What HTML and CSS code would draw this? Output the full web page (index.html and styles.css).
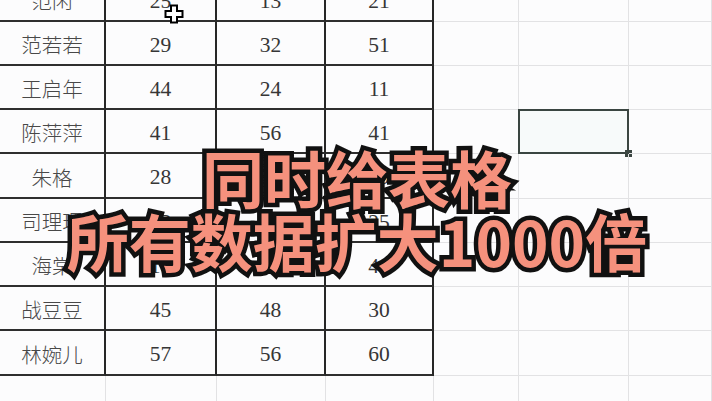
FILE: index.html
```html
<!DOCTYPE html>
<html lang="zh">
<head>
<meta charset="utf-8">
<title>表格</title>
<link rel="stylesheet" href="styles.css">
</head>
<body>
<div class="screen">
  <div class="sheet">
    <div class="c t n">范闲</div><div class="c t">25</div><div class="c t">13</div><div class="c t">21</div><div class="c"></div><div class="c"></div><div class="c"></div>
    <div class="c t n">范若若</div><div class="c t">29</div><div class="c t">32</div><div class="c t">51</div><div class="c"></div><div class="c"></div><div class="c"></div>
    <div class="c t n">王启年</div><div class="c t">44</div><div class="c t">24</div><div class="c t">11</div><div class="c"></div><div class="c"></div><div class="c"></div>
    <div class="c t n">陈萍萍</div><div class="c t">41</div><div class="c t">56</div><div class="c t">41</div><div class="c"></div><div class="c sel"></div><div class="c"></div>
    <div class="c t n">朱格</div><div class="c t">28</div><div class="c t">37</div><div class="c t">19</div><div class="c"></div><div class="c"></div><div class="c"></div>
    <div class="c t n">司理理</div><div class="c t">33</div><div class="c t">46</div><div class="c t">25</div><div class="c"></div><div class="c"></div><div class="c"></div>
    <div class="c t n">海棠</div><div class="c t">18</div><div class="c t">38</div><div class="c t">40</div><div class="c"></div><div class="c"></div><div class="c"></div>
    <div class="c t n">战豆豆</div><div class="c t">45</div><div class="c t">48</div><div class="c t">30</div><div class="c"></div><div class="c"></div><div class="c"></div>
    <div class="c t n">林婉儿</div><div class="c t">57</div><div class="c t">56</div><div class="c t">60</div><div class="c"></div><div class="c"></div><div class="c"></div>
    <div class="c"></div><div class="c"></div><div class="c"></div><div class="c"></div><div class="c"></div><div class="c"></div><div class="c"></div>
  </div>
  <svg class="cursor" width="20" height="20" viewBox="0 0 20 20">
    <path d="M7 1.5 H13 V7 H18.5 V13 H13 V18.5 H7 V13 H1.5 V7 H7 Z" fill="#fff" stroke="#000" stroke-width="2" stroke-linejoin="miter"/>
  </svg>
  <div class="caption">
    <div class="line">同时给表格</div>
    <div class="line">所有数据扩大1000倍</div>
  </div>
</div>
</body>
</html>
```
FILE: styles.css
```css
* { box-sizing: border-box; }
html, body {
  margin: 0;
  padding: 0;
  background: #fcfcfd;
}
.screen {
  position: relative;
  width: 712px;
  height: 401px;
  overflow: hidden;
}
.sheet {
  display: grid;
  grid-template-columns: 106px 111px 109px 108px 85px 110px 1fr;
  grid-template-rows: 44px 44px 44px 44px 45px 44px 44px 44px 45px 44px;
  margin-top: -22px;
}
.c {
  position: relative;
  border-right: 1px solid #e2e2e4;
  border-bottom: 1px solid #e2e2e4;
  display: flex;
  align-items: center;
  justify-content: center;
  font-family: "Liberation Serif", "Noto Sans CJK SC", serif;
  font-size: 21.5px;
  color: #363636;
  padding-top: 4px;
}
.t {
  border-right: 2px solid #262626;
  border-bottom: 2px solid #2e2e2e;
}
.n {
  font-family: "Noto Sans CJK SC", sans-serif;
  font-weight: 300;
  font-size: 20.5px;
  color: #484848;
  padding-top: 2px;
}
.sel {
  background: #f7fafa;
}
.sel::before {
  content: "";
  position: absolute;
  top: -1px;
  left: -1px;
  right: -1px;
  bottom: -1px;
  border: 2px solid #3a4541;
}
.sel::after {
  content: "";
  position: absolute;
  right: -4px;
  bottom: -4px;
  width: 7px;
  height: 7px;
  background: #3a4541;
}
.cursor {
  position: absolute;
  left: 164px;
  top: 4px;
}
.caption {
  position: absolute;
  inset: 0;
  display: flex;
  flex-direction: column;
  align-items: center;
  padding-top: 146px;
  padding-left: 2px;
}
.line {
  font-family: "Noto Sans CJK SC", sans-serif;
  font-weight: 700;
  font-size: 62px;
  line-height: 63px;
  color: #f5917d;
  -webkit-text-stroke: 9px #111;
  paint-order: stroke fill;
  white-space: nowrap;
}
```
